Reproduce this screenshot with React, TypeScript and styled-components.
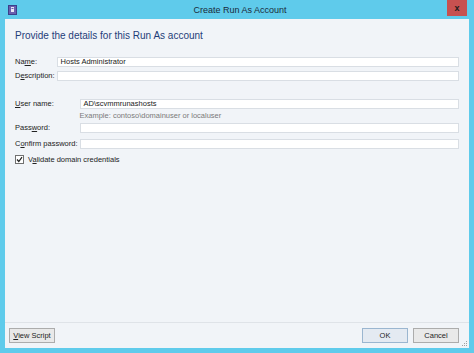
import React from "react";
import styled, { createGlobalStyle } from "styled-components";

const GlobalStyle = createGlobalStyle`
  html, body {
    margin: 0;
    padding: 0;
    background: #5fcbeb;
  }
  body {
    font-family: "Liberation Sans", "Noto Sans", sans-serif;
  }
`;

const Window = styled.div`
  width: 474px;
  height: 353px;
  background: #5fcbeb;
  display: flex;
  flex-direction: column;
  box-sizing: border-box;
  padding: 0 5px 5px 5px;
`;

const TitleBar = styled.div`
  height: 19px;
  flex: none;
  display: flex;
  align-items: center;
  position: relative;
`;

const AppIcon = styled.svg`
  width: 9px;
  height: 10px;
  margin-left: 3px;
`;

const Title = styled.div`
  flex: 1;
  text-align: center;
  font-size: 9px;
  color: #1a2a3a;
  margin-left: -6px;
`;

const CloseButton = styled.div`
  position: absolute;
  top: 0;
  right: 2px;
  width: 20px;
  height: 16px;
  background: #c75150;
  display: flex;
  align-items: center;
  justify-content: center;
  color: #1c1c1c;
  font-size: 9px;
  font-weight: bold;
`;

const Client = styled.div`
  flex: 1;
  background: #f1f4f8;
  display: flex;
  flex-direction: column;
`;

const Body = styled.div`
  flex: 1;
  padding: 11px 10px 0 10px;
  color: #222;
  font-size: 7.5px;
`;

const Heading = styled.div`
  font-size: 10px;
  line-height: 12px;
  color: #1f3d78;
  margin-bottom: 15px;
`;

const FieldGroup = styled.div<{ $after: number }>`
  display: grid;
  grid-template-columns: auto 1fr;
  column-gap: 2px;
  row-gap: 4px;
  align-items: center;
  margin-bottom: ${(p) => p.$after}px;
`;

const Label = styled.div<{ $push?: number }>`
  white-space: nowrap;
  line-height: 10px;
  margin-top: ${(p) => p.$push ?? 0}px;
`;

const Input = styled.div<{ $push?: number }>`
  height: 8px;
  background: #ffffff;
  border: 1px solid #d9dee4;
  padding: 0 3px;
  line-height: 8px;
  font-size: 7.5px;
  color: #1a1a1a;
  margin-top: ${(p) => p.$push ?? 0}px;
`;

const Hint = styled.div`
  color: #7a7a7a;
  line-height: 6px;
  height: 6px;
`;

const CheckRow = styled.div`
  display: flex;
  align-items: center;
  gap: 4px;
`;

const CheckBox = styled.div`
  width: 7px;
  height: 7px;
  border: 1px solid #707070;
  background: #fff;
  display: flex;
  align-items: center;
  justify-content: center;
`;

const Footer = styled.div`
  flex: none;
  height: 25px;
  border-top: 1px solid #dfe3e8;
  display: flex;
  align-items: center;
  padding: 0 10px 0 4px;
  position: relative;
`;

const Button = styled.div<{ $default?: boolean }>`
  width: 46px;
  height: 15px;
  box-sizing: border-box;
  border: 1px solid ${(p) => (p.$default ? "#9bb6d0" : "#acacac")};
  background: ${(p) => (p.$default ? "#e4eaf2" : "#e9e9e9")};
  display: flex;
  align-items: center;
  justify-content: center;
  font-size: 7.5px;
  color: #1e1e1e;
`;

const Spacer = styled.div`
  flex: 1;
`;

const ButtonGroup = styled.div`
  display: flex;
  gap: 5px;
`;

const Grip = styled.svg`
  position: absolute;
  right: 1px;
  bottom: 1px;
  width: 6px;
  height: 6px;
`;

const U = styled.span`
  text-decoration: underline;
`;

export default function App() {
  return (
    <>
      <GlobalStyle />
      <Window>
        <TitleBar>
          <AppIcon viewBox="0 0 9 10">
            <rect x="0" y="0" width="9" height="10" fill="#3b3f8a" />
            <rect x="1" y="1" width="7" height="8" fill="#6a5fae" />
            <rect x="3" y="2" width="3" height="5" fill="#e8e8f4" />
            <rect x="3.5" y="3" width="2" height="1" fill="#6a5fae" />
          </AppIcon>
          <Title>Create Run As Account</Title>
          <CloseButton>x</CloseButton>
        </TitleBar>
        <Client>
          <Body>
            <Heading>Provide the details for this Run As account</Heading>
            <FieldGroup $after={18}>
              <Label>
                Na<U>m</U>e:
              </Label>
              <Input>Hosts Administrator</Input>
              <Label>
                D<U>e</U>scription:
              </Label>
              <Input />
            </FieldGroup>
            <FieldGroup $after={6}>
              <Label>
                <U>U</U>ser name:
              </Label>
              <Input>AD\scvmmrunashosts</Input>
              <span />
              <Hint>Example: contoso\domainuser or localuser</Hint>
              <Label>
                Pass<U>w</U>ord:
              </Label>
              <Input />
              <Label $push={2}>
                C<U>o</U>nfirm password:
              </Label>
              <Input $push={2} />
            </FieldGroup>
            <CheckRow>
              <CheckBox>
                <svg width="7" height="7" viewBox="0 0 7 7">
                  <path d="M1 3.5 L2.8 5.5 L6 1.2" stroke="#222" strokeWidth="1.2" fill="none" />
                </svg>
              </CheckBox>
              <span>
                V<U>a</U>lidate domain credentials
              </span>
            </CheckRow>
          </Body>
          <Footer>
            <Button>
              <span>
                <U>V</U>iew Script
              </span>
            </Button>
            <Spacer />
            <ButtonGroup>
              <Button $default>OK</Button>
              <Button>Cancel</Button>
            </ButtonGroup>
            <Grip viewBox="0 0 6 6">
              <rect x="4" y="0" width="1" height="1" fill="#a0a0a0" />
              <rect x="2" y="2" width="1" height="1" fill="#a0a0a0" />
              <rect x="4" y="2" width="1" height="1" fill="#a0a0a0" />
              <rect x="0" y="4" width="1" height="1" fill="#a0a0a0" />
              <rect x="2" y="4" width="1" height="1" fill="#a0a0a0" />
              <rect x="4" y="4" width="1" height="1" fill="#a0a0a0" />
            </Grip>
          </Footer>
        </Client>
      </Window>
    </>
  );
}
